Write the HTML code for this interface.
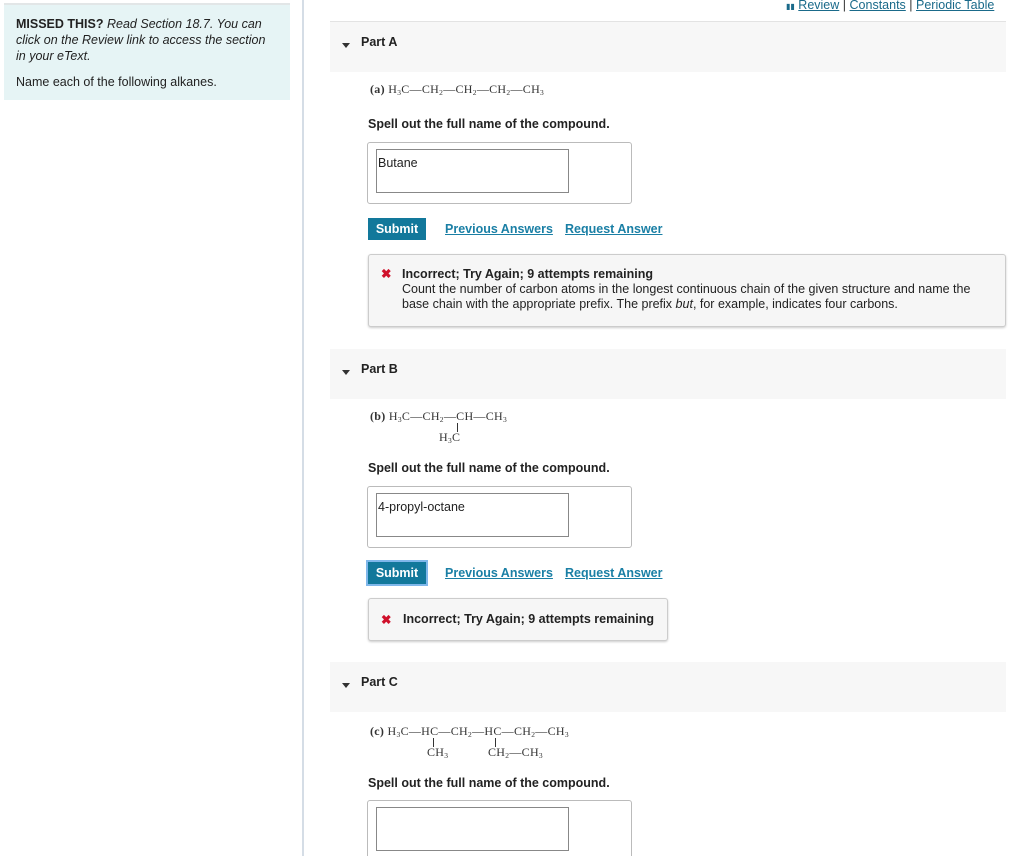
<!DOCTYPE html>
<html><head><meta charset="utf-8"><style>
html,body{margin:0;width:1024px;height:856px;overflow:hidden}
body{background:#fff;font-family:"Liberation Sans",Arial,sans-serif;color:#222;position:relative}
.a{position:absolute}
.side{left:4px;top:3px;width:286px;height:97px;background:#e6f4f5;border-top:2px solid #e2e6e7;box-sizing:border-box;font-size:12.5px;line-height:16px;padding:11px 12px}
.vl{left:302px;top:0;width:2px;height:856px;background:#d5dde6}
.ph{left:330px;width:676px;height:50px;background:#f7f7f7;font-size:12.5px;font-weight:bold}
.ph span{position:absolute;left:31px;top:13px}
.ph i{position:absolute;left:12px;top:21px;border-left:4px solid transparent;border-right:4px solid transparent;border-top:5px solid #333}
.chem{font-family:"Liberation Serif",serif;font-size:12px;letter-spacing:0.3px;color:#333}
.q{left:368px;font-size:12.5px;font-weight:bold}
.ob{left:367px;width:265px;height:62px;border:1px solid #bbb;border-radius:3px;box-sizing:border-box}
.ib{position:absolute;left:8px;top:6px;width:193px;height:44px;border:1px solid #888;background:#fff;font-size:12.5px;padding:6px 0 0 1px;box-sizing:border-box}
.btn{left:368px;width:58px;height:22px;background:#12789b;color:#fff;font-size:12.5px;font-weight:bold;text-align:center;line-height:22px}
.lk{font-size:12.5px;font-weight:bold;color:#1a7fa5;text-decoration:underline}
.fb{left:368px;border:1px solid #ccc;border-radius:3px;background:#f6f6f6;box-shadow:0 1px 2px #ccc;font-size:12.5px;box-sizing:border-box}
.x{color:#d0112b;font-weight:bold;position:absolute;left:12px}
sub{font-size:7.5px;vertical-align:-2px}
</style></head><body>
<div class="a vl"></div>
<div class="a side"><b>MISSED THIS?</b> <i>Read Section 18.7. You can click on the Review link to access the section in your eText.</i><div style="margin-top:10px">Name each of the following alkanes.</div></div>
<div class="a" style="left:786px;top:-2px;font-size:12.5px;color:#1a6a8a"><span style="font-size:8px">▮▮</span> <u>Review</u> <span style="color:#333">|</span> <u>Constants</u> <span style="color:#333">|</span> <u>Periodic Table</u></div>
<div class="a" style="left:330px;top:21px;width:676px;height:1px;background:#e3e3e3"></div>

<div class="a ph" style="top:22px"><i></i><span>Part A</span></div>
<div class="a chem" style="left:370px;top:82px"><b>(a)</b> H<sub>3</sub>C—CH<sub>2</sub>—CH<sub>2</sub>—CH<sub>2</sub>—CH<sub>3</sub></div>
<div class="a q" style="top:117px">Spell out the full name of the compound.</div>
<div class="a ob" style="top:142px"><div class="ib">Butane</div></div>
<div class="a btn" style="top:218px">Submit</div>
<div class="a lk" style="left:445px;top:222px">Previous Answers</div>
<div class="a lk" style="left:565px;top:222px">Request Answer</div>
<div class="a fb" style="top:254px;width:638px;height:73px;padding:12px 30px 0 33px;line-height:15px"><span class="x" style="top:12px">✖</span><b>Incorrect; Try Again; 9 attempts remaining</b><br>Count the number of carbon atoms in the longest continuous chain of the given structure and name the base chain with the appropriate prefix. The prefix <i>but</i>, for example, indicates four carbons.</div>

<div class="a ph" style="top:349px"><i></i><span>Part B</span></div>
<div class="a chem" style="left:370px;top:409px"><b>(b)</b> H<sub>3</sub>C—CH<sub>2</sub>—CH—CH<sub>3</sub></div>
<div class="a" style="left:457px;top:423px;width:1px;height:9px;background:#333"></div>
<div class="a chem" style="left:439px;top:430px">H<sub>3</sub>C</div>
<div class="a q" style="top:461px">Spell out the full name of the compound.</div>
<div class="a ob" style="top:486px"><div class="ib">4-propyl-octane</div></div>
<div class="a btn" style="top:562px;box-shadow:0 0 0 2px #7fb7ea">Submit</div>
<div class="a lk" style="left:445px;top:566px">Previous Answers</div>
<div class="a lk" style="left:565px;top:566px">Request Answer</div>
<div class="a fb" style="top:598px;width:300px;height:43px;padding:13px 0 0 34px"><span class="x" style="top:13px">✖</span><b>Incorrect; Try Again; 9 attempts remaining</b></div>

<div class="a ph" style="top:662px"><i></i><span>Part C</span></div>
<div class="a chem" style="left:370px;top:724px"><b>(c)</b> H<sub>3</sub>C—HC—CH<sub>2</sub>—HC—CH<sub>2</sub>—CH<sub>3</sub></div>
<div class="a" style="left:433px;top:738px;width:1px;height:9px;background:#333"></div>
<div class="a" style="left:495px;top:738px;width:1px;height:9px;background:#333"></div>
<div class="a chem" style="left:427px;top:745px">CH<sub>3</sub></div>
<div class="a chem" style="left:488px;top:745px">CH<sub>2</sub>—CH<sub>3</sub></div>
<div class="a q" style="top:776px">Spell out the full name of the compound.</div>
<div class="a ob" style="top:800px;height:70px"><div class="ib"></div></div>
</body></html>
